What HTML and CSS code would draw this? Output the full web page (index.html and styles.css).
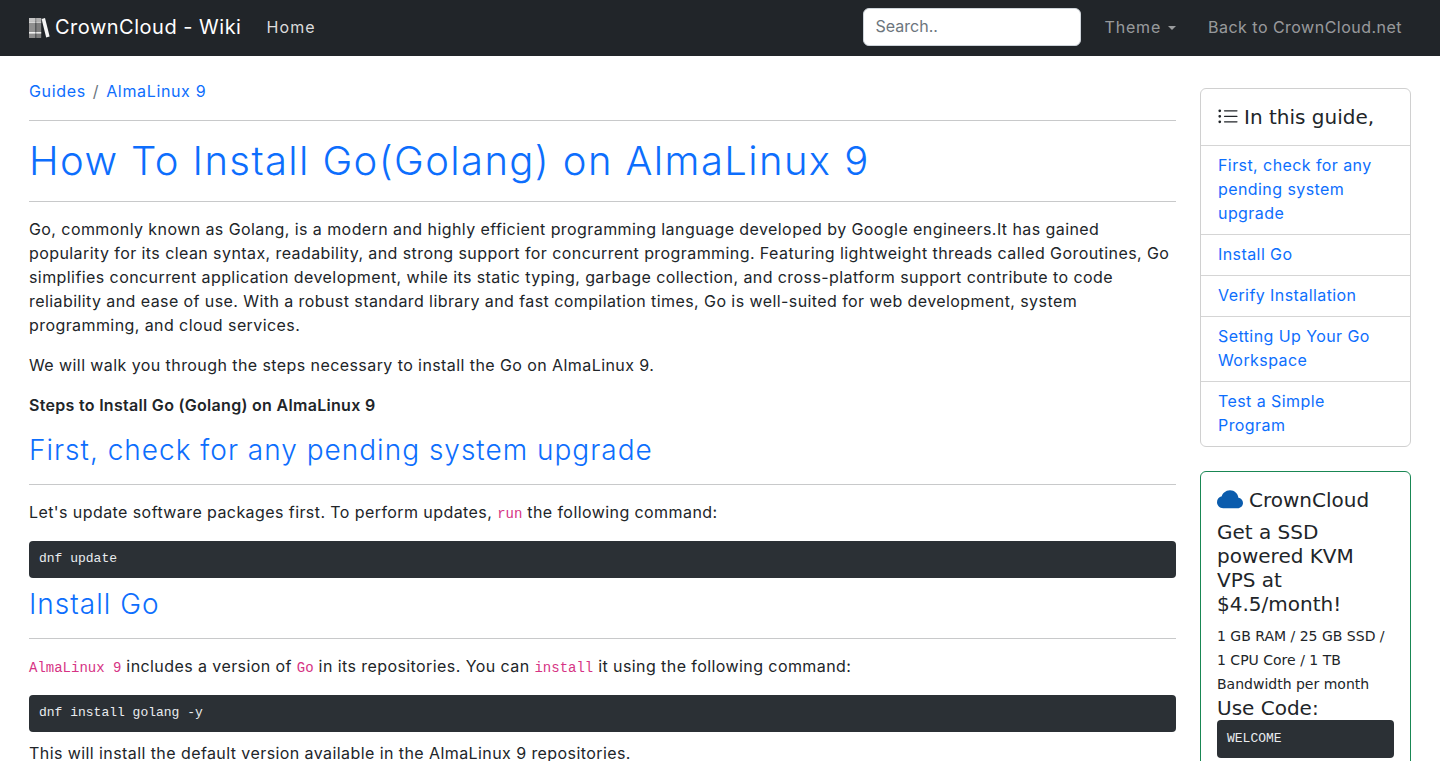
FILE: index.html
```html
<!DOCTYPE html>
<html lang="en">
<head>
    <meta charset="UTF-8">
    <meta name="viewport" content="width=device-width, initial-scale=1.0">
    <title>How To Install Go(Golang) on AlmaLinux 9</title>
    <link rel="stylesheet" href="styles.css">
</head>
<body>

<nav class="navbar">
    <a class="brand" href="#">
        <svg class="brand-icon" viewBox="0 0 21 21" width="21" height="21">
            <rect x="0" y="1" width="6.5" height="20" rx="0.5" fill="#8f8f8f"/>
            <rect x="0" y="1" width="6.5" height="3" fill="#c4c4c4"/>
            <rect x="0" y="15" width="6.5" height="1.6" fill="#f2f2f2"/>
            <rect x="0" y="4.5" width="6.5" height="1.2" fill="#f2f2f2"/>
            <rect x="7.2" y="1" width="5" height="20" rx="0.5" fill="#7d7d7d"/>
            <rect x="7.2" y="1" width="5" height="3" fill="#b0b0b0"/>
            <rect x="7.2" y="15" width="5" height="1.6" fill="#e6e6e6"/>
            <rect x="7.2" y="4.5" width="5" height="1.2" fill="#e6e6e6"/>
            <path d="M12.6 2 L16 1 L20.6 19.4 L17.2 20.4 Z" fill="#f5f5f5"/>
        </svg>
        <span>CrownCloud - Wiki</span>
    </a>
    <a class="nav-link nav-home" href="#">Home</a>
    <input class="search" type="text" placeholder="Search..">
    <a class="nav-link nav-muted dropdown" href="#">Theme</a>
    <a class="nav-link nav-muted nav-back" href="#">Back to CrownCloud.net</a>
</nav>

<div class="page">
    <main class="content">
        <ol class="breadcrumb">
            <li><a href="#">Guides</a></li>
            <li class="sep">/</li>
            <li><a href="#">AlmaLinux 9</a></li>
        </ol>
        <hr>
        <h1><a href="#">How To Install Go(Golang) on AlmaLinux 9</a></h1>
        <hr>
        <p>Go, commonly known as Golang, is a modern and highly efficient programming language developed by Google engineers.It has gained popularity for its clean syntax, readability, and strong support for concurrent programming. Featuring lightweight threads called Goroutines, Go simplifies concurrent application development, while its static typing, garbage collection, and cross-platform support contribute to code reliability and ease of use. With a robust standard library and fast compilation times, Go is well-suited for web development, system programming, and cloud services.</p>
        <p>We will walk you through the steps necessary to install the Go on AlmaLinux 9.</p>
        <p><strong>Steps to Install Go (Golang) on AlmaLinux 9</strong></p>

        <h2><a href="#">First, check for any pending system upgrade</a></h2>
        <hr>
        <p>Let's update software packages first. To perform updates, <code>run</code> the following command:</p>
        <pre>dnf update</pre>

        <h2><a href="#">Install Go</a></h2>
        <hr>
        <p><code>AlmaLinux 9</code> includes a version of <code>Go</code> in its repositories. You can <code>install</code> it using the following command:</p>
        <pre>dnf install golang -y</pre>
        <p>This will install the default version available in the AlmaLinux 9 repositories.</p>
    </main>

    <aside class="sidebar">
        <div class="card toc">
            <div class="toc-title">
                <svg viewBox="0 0 16 16" width="22" height="22" fill="#212529">
                    <path fill-rule="evenodd" d="M5 11.5a.5.5 0 0 1 .5-.5h9a.5.5 0 0 1 0 1h-9a.5.5 0 0 1-.5-.5zm0-4a.5.5 0 0 1 .5-.5h9a.5.5 0 0 1 0 1h-9a.5.5 0 0 1-.5-.5zm0-4a.5.5 0 0 1 .5-.5h9a.5.5 0 0 1 0 1h-9a.5.5 0 0 1-.5-.5zm-3 1a1 1 0 1 0 0-2 1 1 0 0 0 0 2zm0 4a1 1 0 1 0 0-2 1 1 0 0 0 0 2zm0 4a1 1 0 1 0 0-2 1 1 0 0 0 0 2z"/>
                </svg>
                <span>In this guide,</span>
            </div>
            <a class="toc-item" href="#">First, check for any pending system upgrade</a>
            <a class="toc-item" href="#">Install Go</a>
            <a class="toc-item" href="#">Verify Installation</a>
            <a class="toc-item" href="#">Setting Up Your Go Workspace</a>
            <a class="toc-item" href="#">Test a Simple Program</a>
        </div>

        <div class="card promo">
            <div class="promo-brand">
                <svg viewBox="0 0 16 16" width="26" height="26" fill="#0b5cad">
                    <path d="M4.406 3.342A5.53 5.53 0 0 1 8 2c2.69 0 4.923 2 5.166 4.579C14.758 6.804 16 8.137 16 9.773 16 11.569 14.502 13 12.687 13H3.781C1.708 13 0 11.366 0 9.318c0-1.763 1.266-3.223 2.942-3.593.143-.863.698-1.723 1.464-2.383z"/>
                </svg>
                <span>CrownCloud</span>
            </div>
            <div class="promo-title">Get a SSD powered KVM VPS at $4.5/month!</div>
            <div class="promo-spec">1 GB RAM / 25 GB SSD / 1 CPU Core / 1 TB Bandwidth per month</div>
            <div class="promo-code">Use Code:</div>
            <pre class="promo-pre">WELCOME</pre>
        </div>
    </aside>
</div>

</body>
</html>
```

FILE: styles.css
```css
* {
    box-sizing: border-box;
}

html, body {
    height: 761px;
    overflow: hidden;
}

body {
    margin: 0;
    background-color: #fff;
    color: #212529;
    font-family: 'Inter', 'Open Sans', sans-serif;
    font-size: 16px;
    line-height: 24px;
    letter-spacing: 0.42px;
}

a {
    color: #0d6efd;
    text-decoration: none;
}

.navbar {
    display: flex;
    align-items: center;
    height: 56px;
    padding: 0 30px 2px 29px;
    background-color: #212529;
}

.brand {
    display: flex;
    align-items: center;
    color: #fff;
    font-size: 20px;
    gap: 5px;
    letter-spacing: 0.5px;
}

.nav-link {
    color: rgba(255, 255, 255, 0.85);
}

.nav-home {
    margin-left: 25px;
    letter-spacing: 1.1px;
}

.search {
    width: 218px;
    height: 38px;
    margin-left: auto;
    padding: 5px 12px 7px;
    border: 1px solid #ced4da;
    border-radius: 6px;
    font-family: inherit;
    font-size: 16px;
}

.search::placeholder {
    color: #6c757d;
}

.nav-muted {
    color: rgba(255, 255, 255, 0.55);
    margin-left: 24px;
    margin-right: 8px;
}

.nav-back {
    letter-spacing: 0.48px;
}

.dropdown {
    letter-spacing: 0.8px;
}

.dropdown::after {
    content: "";
    display: inline-block;
    margin-left: 7px;
    vertical-align: 3px;
    border-top: 4px solid;
    border-left: 4px solid transparent;
    border-right: 4px solid transparent;
}

.page {
    display: flex;
    gap: 24px;
    padding: 32px 29px 0 29px;
}

.content {
    flex: 1;
    min-width: 0;
}

.sidebar {
    flex: none;
    width: 211px;
}

.breadcrumb {
    display: flex;
    gap: 7px;
    list-style: none;
    margin: -9px 0 17px;
    padding: 0;
    height: 24px;
    letter-spacing: 0.65px;
}

.sep {
    color: #6c757d;
}

hr {
    margin: 16px 0;
    border: 0;
    border-top: 1px solid #c8c9ca;
}

h1 {
    margin: 0;
    font-size: 40px;
    font-weight: 300;
    line-height: 48px;
    letter-spacing: 1.4px;
}

h2 {
    margin: -1px 0 0;
    padding-bottom: 1px;
    font-size: 28px;
    font-weight: 300;
    line-height: 34px;
    letter-spacing: 1px;
}

p {
    margin: -1px 0 17px;
}

strong {
    font-weight: 600;
    letter-spacing: 0.3px;
}

code {
    font-family: 'Liberation Mono', monospace;
    font-size: 14px;
    line-height: 1;
    letter-spacing: 0;
    color: #d63384;
}

pre {
    margin: 0 0 10px;
    padding: 8px 10px 10px;
    background-color: #2b3035;
    border-radius: 4px;
    color: #e9ecef;
    font-family: 'Liberation Mono', monospace;
    font-size: 13px;
    line-height: 19px;
    letter-spacing: 0;
}

.card {
    border: 1px solid #d0d0d0;
    border-radius: 6px;
    background-color: #fff;
}

.toc-title {
    display: flex;
    align-items: center;
    gap: 5px;
    height: 56px;
    padding: 0 16px;
    font-family: 'DejaVu Sans', sans-serif;
    font-size: 20px;
    letter-spacing: 0;
}

.toc-item {
    display: block;
    padding: 7px 16px 9px 17px;
    border-top: 1px solid #d5d5d5;
}

.promo {
    margin-top: 24px;
    padding: 15px 16px 16px;
    border-color: #198754;
    font-family: 'DejaVu Sans', sans-serif;
    letter-spacing: 0;
}

.promo-brand {
    display: flex;
    align-items: center;
    gap: 6px;
    font-size: 20px;
}

.promo-title {
    font-size: 20px;
    margin-top: 7px;
}

.promo-spec {
    font-size: 14px;
    margin-top: 8px;
}

.promo-code {
    font-size: 20px;
}

.promo-pre {
    margin: 0;
    padding: 9px 10px 10px;
}
```
